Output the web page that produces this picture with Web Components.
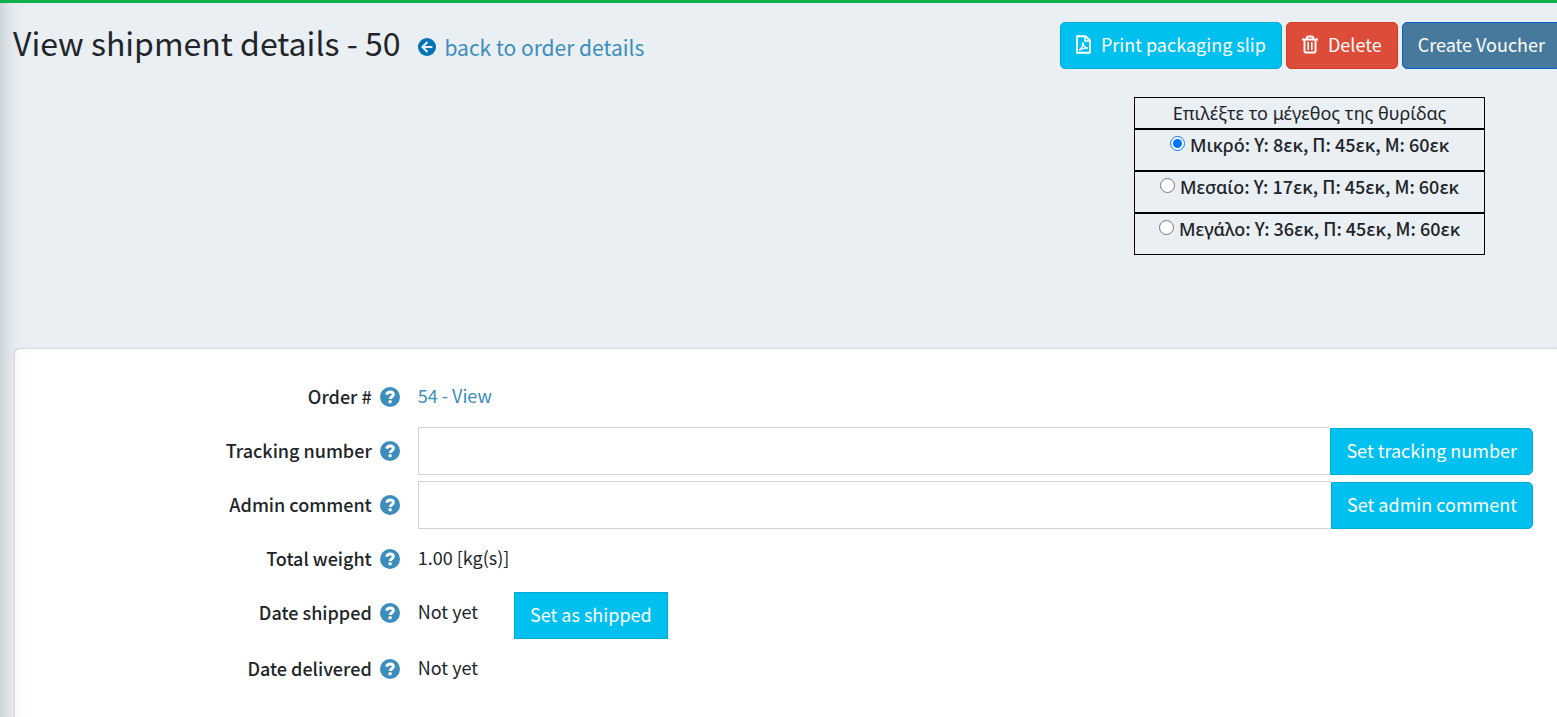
<!DOCTYPE html>
<html lang="en">
<head>
<meta charset="utf-8">
<meta name="viewport" content="width=device-width, initial-scale=1">
<title>View shipment details</title>
<style>
  html { height: 100%; }
  body {
    margin: 0;
    min-height: 100%;
    background: #eaeff4;
    color: #212529;
    font: 400 18px/28px "Source Sans Pro", "Noto Sans CJK SC", "Noto Sans", sans-serif;
    overflow-x: hidden;
  }
</style>
</head>
<body>
<shipment-page></shipment-page>

<script>
const ICONS = {
  back: '<svg viewBox="0 0 20 20" width="18" height="18"><circle cx="10" cy="10" r="10" fill="#0073b7"/><path d="M16 10H5.500M10.500 4.500L5 10l5.500 5.500" fill="none" stroke="#e9eef4" stroke-width="2.400"/></svg>',
  pdf: '<svg viewBox="0 0 15 19" width="15" height="19" fill="none" stroke="#fff"><path d="M1 1.200h8.500L14 5.500v12.300H1z" stroke-width="1.900" stroke-linejoin="round"/><path d="M9 1v5h5" stroke-width="1.500"/><path d="M3 15.300c2-1.200 4-4.500 3.800-8C7 11 9 13 12 13.200c-3.500-.5-6.500.6-9 2.100z" stroke-width="1.300"/></svg>',
  trash: '<svg viewBox="0 0 16 19" width="16" height="19" fill="none" stroke="#fff"><path d="M0 4.500h16M4.800 4V2.500Q5 1.500 6 1.500h4q1 0 1.200 1V4M2.500 5v11.500q0 1 1 1h9q1 0 1-1V5" stroke-width="1.900"/><path d="M6.200 7v8M9.800 7v8" stroke-width="1.600"/></svg>',
  help: '<svg viewBox="0 0 20 20" width="20" height="20"><circle cx="10" cy="10" r="10" fill="#3c8dbc"/><path d="M6.600 7.700C7.100 5.800 8.400 5 10 5c2 0 3.400 1.100 3.400 2.600 0 2.100-3.200 2.200-3.200 4.400" fill="none" stroke="#fff" stroke-width="2.900"/><rect x="8.600" y="13.300" width="3" height="2.900" rx=".4" fill="#fff"/></svg>'
};

class BaseElement extends HTMLElement {
  connectedCallback() {
    if (!this.shadowRoot) {
      this.attachShadow({ mode: 'open' }).innerHTML = this.template();
    }
  }
}

class AppIcon extends BaseElement {
  template() {
    return `<style>
      :host { display: inline-flex; flex: none; }
      svg { display: block; }
    </style>${ICONS[this.getAttribute('name')]}`;
  }
}

class ActionButton extends BaseElement {
  template() {
    return `<style>
      :host { display: block; flex: none; }
      button {
        display: flex; align-items: center; gap: 10px;
        box-sizing: border-box; height: 47px; padding: 0 15px 3px;
        border: 1px solid var(--edge, #00acd6);
        border-radius: var(--corners, 5px);
        background: var(--fill, #00c0ef); color: #fff;
        font: inherit; white-space: nowrap; cursor: pointer;
      }
    </style><button type="button"><slot name="icon"></slot><slot></slot></button>`;
  }
}

class PageHeader extends BaseElement {
  template() {
    return `<style>
      :host { display: flex; justify-content: space-between; align-items: flex-start; margin-right: -4px; }
      h1 { margin: 0; padding-top: 2px; font-size: 32px; line-height: 36px; font-weight: 400; display: flex; align-items: baseline; gap: 18px; white-space: nowrap; }
      a { font-size: 21px; color: #3c8dbc; text-decoration: none; display: inline-flex; align-items: center; gap: 8px; }
      div { display: flex; gap: 4px; }
      .danger { --fill: #dd4b39; --edge: #d73925; }
      .voucher { --fill: #46799c; --edge: #0062cc; }
    </style>
    <h1>View shipment details - 50 <a href="#"><app-icon name="back"></app-icon>back to order details</a></h1>
    <div>
      <action-button><app-icon slot="icon" name="pdf"></app-icon>Print packaging slip</action-button>
      <action-button class="danger"><app-icon slot="icon" name="trash"></app-icon>Delete</action-button>
      <action-button class="voucher">Create Voucher</action-button>
    </div>`;
  }
}

class LockerPicker extends BaseElement {
  template() {
    const sizes = [['Μικρό', '8'], ['Μεσαίο', '17'], ['Μεγάλο', '36']];
    return `<style>
      :host { display: block; width: 351px; margin: 28px 72px 0 auto; text-align: center; }
      div { box-sizing: border-box; border: 1px solid #000; white-space: nowrap; }
      .title, .name { font-family: "Noto Sans", sans-serif; }
      .title { height: 32px; line-height: 30px; font-weight: 400; }
      .row { height: 42px; }
      label { font-weight: 500; color: #212529; }
      input { width: 15px; height: 15px; margin: 0 5px 0 0; vertical-align: 1px; }
    </style>
    <section role="radiogroup" aria-labelledby="title" lang="el">
      <div class="title" id="title">Επιλέξτε το μέγεθος της θυρίδας</div>
      ${sizes.map(([name, h], i) => `<div class="row"><input type="radio" name="size" id="size${i}"${i ? '' : ' checked'}><label for="size${i}"><span class="name">${name}</span>: Υ: ${h}εκ, Π: 45εκ, Μ: 60εκ</label></div>`).join('')}
    </section>`;
  }
}

const ROW_STYLE = `
  :host { display: grid; grid-template-columns: minmax(0, 1fr) minmax(0, 3fr); column-gap: 18px; }
  .label { display: flex; justify-content: flex-end; align-items: center; gap: 8px; height: 48px; font-weight: 500; color: #212529; }
  .label > :first-child { padding-bottom: 2px; }
`;

class InfoRow extends BaseElement {
  template() {
    return `<style>${ROW_STYLE}
      .value { display: flex; align-items: flex-start; gap: 36px; line-height: 44px; }
      ::slotted(a) { color: #3c8dbc; text-decoration: none; }
      ::slotted(action-button) { --corners: 0; margin-top: 3px; line-height: 28px; }
    </style>
    <div class="label"><span>${this.getAttribute('label')}</span><app-icon name="help"></app-icon></div>
    <div class="value"><slot></slot></div>`;
  }
}

class InputRow extends BaseElement {
  template() {
    return `<style>${ROW_STYLE}
      .value { display: flex; align-items: flex-end; }
      input { flex: 1; min-width: 0; box-sizing: border-box; height: 48px; padding: 0 12px; border: 1px solid #ced4da; border-right: 0; border-radius: 0; background: #fff; font: inherit; }
      action-button { --corners: 0 5px 5px 0; }
    </style>
    <div class="label"><label for="field">${this.getAttribute('label')}</label><app-icon name="help"></app-icon></div>
    <div class="value"><input id="field" type="text"><action-button>${this.getAttribute('action')}</action-button></div>`;
  }
}

class DetailPanel extends BaseElement {
  template() {
    return `<style>
      :host {
        display: flex; flex-direction: column; gap: 6px; flex: 1; box-sizing: border-box;
        padding: 24px 24px 24px 13px; background: #fff;
        border-radius: 5px 0 0 0; box-shadow: 0 0 2px rgba(0, 0, 0, .3);
      }
    </style><slot></slot>`;
  }
}

class ShipmentPage extends BaseElement {
  template() {
    return `<style>
      :host { display: flex; flex-direction: column; box-sizing: border-box; min-height: 100vh; border-top: 3px solid #0db14b; position: relative; overflow: hidden; }
      page-header { padding: 19px 0 0 13px; }
      detail-panel { margin: 94px 0 0 15px; }
      .edge { position: absolute; inset: 0 auto 0 0; width: 28px; pointer-events: none; background: linear-gradient(90deg, rgba(50, 70, 70, .15), rgba(50, 70, 70, .03) 14px, rgba(50, 70, 70, 0)); }
    </style>
    <page-header></page-header>
    <locker-picker></locker-picker>
    <detail-panel>
      <info-row label="Order #"><a href="#">54 - View</a></info-row>
      <input-row label="Tracking number" action="Set tracking number"></input-row>
      <input-row label="Admin comment" action="Set admin comment"></input-row>
      <info-row label="Total weight"><span>1.00 [kg(s)]</span></info-row>
      <info-row label="Date shipped"><span>Not yet</span><action-button>Set as shipped</action-button></info-row>
      <info-row label="Date delivered"><span>Not yet</span></info-row>
    </detail-panel>
    <div class="edge"></div>`;
  }
}

customElements.define('app-icon', AppIcon);
customElements.define('action-button', ActionButton);
customElements.define('page-header', PageHeader);
customElements.define('locker-picker', LockerPicker);
customElements.define('info-row', InfoRow);
customElements.define('input-row', InputRow);
customElements.define('detail-panel', DetailPanel);
customElements.define('shipment-page', ShipmentPage);
</script>
</body>
</html>
